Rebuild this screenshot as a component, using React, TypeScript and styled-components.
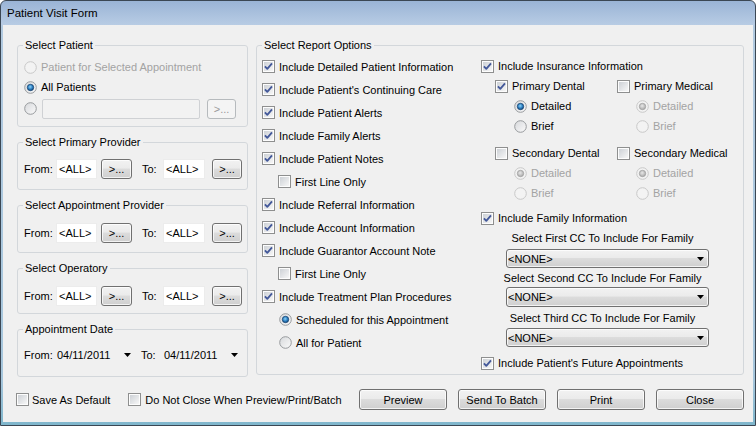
import React from "react";
import styled, { createGlobalStyle } from "styled-components";

const GlobalStyle = createGlobalStyle`
  html, body {
    margin: 0;
    padding: 0;
    background: #ffffff;
  }
  body {
    font-family: "Liberation Sans", Arial, sans-serif;
    font-size: 11px;
    color: #000;
  }
  #root {
    width: 756px;
    height: 426px;
  }
`;

const Window = styled.div`
  width: 756px;
  height: 426px;
  box-sizing: border-box;
  display: flex;
  flex-direction: column;
  padding: 0 2px 3px 2px;
  border: 1px solid #3b4754;
  border-radius: 6px 6px 0 0;
  overflow: hidden;
  background: linear-gradient(#9ab4d6 0px, #b8cce4 24px, #b2cae0 26px, #a6c6dc 380px, #7fb6cc 100%);
`;

const TitleBar = styled.div`
  height: 24px;
  display: flex;
  align-items: center;
  padding-left: 4px;
  font-size: 11.5px;
`;

const Body = styled.div`
  flex: 1;
  display: flex;
  flex-direction: column;
  padding: 14px 9px 0 14px;
  background: #f0f0f0;
`;

const Main = styled.div`
  display: flex;
  gap: 8px;
`;

const LeftColumn = styled.div`
  width: 231px;
  display: flex;
  flex-direction: column;
  gap: 9px;
`;

const Group = styled.fieldset<{ $h: number; $w?: number }>`
  margin: 0;
  padding: 0;
  min-width: 0;
  box-sizing: border-box;
  height: ${(p) => p.$h}px;
  width: ${(p) => (p.$w ? `${p.$w}px` : "auto")};
  border: 1px solid #d3d7db;
  border-radius: 3px;
`;

const Legend = styled.legend`
  margin-left: 5px;
  padding: 0 2px;
  line-height: 13px;
  font-size: 11px;
`;

const GroupInner = styled.div<{ $pt?: number; $pl?: number }>`
  display: flex;
  flex-direction: column;
  padding: ${(p) => p.$pt ?? 0}px 0 0 ${(p) => p.$pl ?? 6}px;
`;

const Opt = styled.div<{ $h?: number; $indent?: number; $mt?: number; $gap?: number }>`
  display: flex;
  align-items: center;
  gap: ${(p) => p.$gap ?? 4}px;
  height: ${(p) => p.$h ?? 23}px;
  padding-left: ${(p) => p.$indent ?? 0}px;
  margin-top: ${(p) => p.$mt ?? 0}px;
  white-space: nowrap;
`;

const OptText = styled.span<{ $disabled?: boolean }>`
  color: ${(p) => (p.$disabled ? "#a3a3a3" : "#000")};
`;

const FieldRow = styled.div<{ $pt?: number }>`
  display: flex;
  align-items: center;
  height: 21px;
  margin-top: ${(p) => p.$pt ?? 9}px;
  padding-left: 6px;
  white-space: nowrap;
`;

const FieldLabel = styled.span<{ $w: number; $ml?: number }>`
  width: ${(p) => p.$w}px;
  margin-left: ${(p) => p.$ml ?? 0}px;
  flex-shrink: 0;
`;

const TextBox = styled.div<{ $w: number; $ml?: number; $disabled?: boolean }>`
  width: ${(p) => p.$w}px;
  height: 20px;
  margin-left: ${(p) => p.$ml ?? 0}px;
  box-sizing: border-box;
  display: flex;
  align-items: center;
  padding-left: 2px;
  flex-shrink: 0;
  background: ${(p) => (p.$disabled ? "#f2f2f2" : "#ffffff")};
  border: 1px solid ${(p) => (p.$disabled ? "#cfd1d4" : "#ececec")};
  border-radius: ${(p) => (p.$disabled ? "2px" : "0")};
`;

const Button = styled.button<{ $w: number; $ml?: number; $h?: number }>`
  width: ${(p) => p.$w}px;
  height: ${(p) => p.$h ?? 21}px;
  margin: 0 0 0 ${(p) => p.$ml ?? 0}px;
  padding: 0;
  flex-shrink: 0;
  box-sizing: border-box;
  border: 1px solid #707070;
  border-radius: 3px;
  background: linear-gradient(#f2f2f2 0%, #ebebeb 45%, #dcdcdc 50%, #cfcfcf 100%);
  box-shadow: inset 0 0 0 1px rgba(255, 255, 255, 0.75);
  font: 11px "Liberation Sans", Arial, sans-serif;
  color: #000;
  &:disabled {
    border-color: #b6babd;
    background: #f4f4f4;
    color: #9a9a9a;
    box-shadow: none;
  }
`;

const DateBox = styled.div<{ $w: number; $pr: number }>`
  width: ${(p) => p.$w}px;
  height: 20px;
  box-sizing: border-box;
  display: flex;
  align-items: center;
  justify-content: space-between;
  padding: 0 ${(p) => p.$pr}px 0 1px;
  flex-shrink: 0;
`;

const MiddleGroupInner = styled.div`
  display: flex;
  padding-left: 5px;
`;

const OptionsColumn = styled.div<{ $w?: number; $pt: number }>`
  display: flex;
  flex-direction: column;
  width: ${(p) => (p.$w ? `${p.$w}px` : "auto")};
  padding-top: ${(p) => p.$pt}px;
  flex: ${(p) => (p.$w ? "0 0 auto" : "1")};
`;

const InsuranceGrid = styled.div<{ $mt?: number }>`
  display: grid;
  grid-template-columns: 122px auto;
  margin: ${(p) => p.$mt ?? 0}px 0 0 14px;
`;

const InsuranceBlock = styled.div`
  display: flex;
  flex-direction: column;
`;

const CcLabel = styled.div<{ $mt?: number }>`
  width: 205px;
  height: 19px;
  margin: ${(p) => p.$mt ?? 0}px 0 0 19px;
  display: flex;
  align-items: center;
  justify-content: center;
  white-space: nowrap;
`;

const Combo = styled.div<{ $mt?: number; $h?: number }>`
  width: 203px;
  height: ${(p) => p.$h ?? 19}px;
  margin: ${(p) => p.$mt ?? 0}px 0 0 25px;
  box-sizing: border-box;
  display: flex;
  align-items: center;
  justify-content: space-between;
  padding: 0 4px 0 1px;
  border: 1px solid #707070;
  border-radius: 3px;
  background: linear-gradient(#f2f2f2 0%, #ebebeb 45%, #dcdcdc 50%, #cfcfcf 100%);
  box-shadow: inset 0 0 0 1px rgba(255, 255, 255, 0.75);
`;

const BottomBar = styled.div`
  display: flex;
  align-items: center;
  height: 21px;
  margin: 12px 0 0 -1px;
  white-space: nowrap;
`;

const BottomCheck = styled.div<{ $ml?: number; $gap: number }>`
  display: flex;
  align-items: center;
  gap: ${(p) => p.$gap}px;
  margin-left: ${(p) => p.$ml ?? 0}px;
`;

const ActionButtons = styled.div`
  display: flex;
  gap: 11px;
  margin-left: auto;
`;

const MarkSvg = styled.svg`
  flex-shrink: 0;
  display: block;
`;

function CheckMark({ checked = false, disabled = false }: { checked?: boolean; disabled?: boolean }) {
  return (
    <MarkSvg width="13" height="13" viewBox="0 0 13 13">
      <defs>
        <linearGradient id="cbFill" x1="0" y1="0" x2="1" y2="1">
          <stop offset="0" stopColor="#cdd1d6" />
          <stop offset="1" stopColor="#f7f7f7" />
        </linearGradient>
      </defs>
      <rect x="0.5" y="0.5" width="12" height="12" fill="#fdfdfd" stroke={disabled ? "#c2c2c2" : "#8e8f8f"} />
      <rect x="2" y="2" width="9" height="9" fill={disabled ? "#f4f4f4" : "url(#cbFill)"} />
      {checked && (
        <path d="M2.9 6.3 L5.3 8.9 L10 3.3" fill="none" stroke="#44599a" strokeWidth="1.8" strokeLinejoin="round" />
      )}
    </MarkSvg>
  );
}

function RadioMark({ checked = false, disabled = false }: { checked?: boolean; disabled?: boolean }) {
  return (
    <MarkSvg width="13" height="13" viewBox="0 0 13 13">
      <defs>
        <linearGradient id="rbFill" x1="0" y1="0" x2="1" y2="1">
          <stop offset="0" stopColor="#d6d8db" />
          <stop offset="1" stopColor="#fbfbfb" />
        </linearGradient>
        <radialGradient id="rbDot" cx="0.45" cy="0.4" r="0.6">
          <stop offset="0" stopColor="#8fd3f7" />
          <stop offset="0.6" stopColor="#2b7fc2" />
          <stop offset="1" stopColor="#15477a" />
        </radialGradient>
        <radialGradient id="rbDotOff" cx="0.45" cy="0.4" r="0.6">
          <stop offset="0" stopColor="#e8e8e8" />
          <stop offset="1" stopColor="#a8a8a8" />
        </radialGradient>
      </defs>
      <circle cx="6.5" cy="6.5" r="5.8" fill={disabled ? "#f3f3f3" : "url(#rbFill)"} stroke={disabled ? "#c8c8c8" : "#979a9d"} />
      {checked && (
        <circle
          cx="6.5"
          cy="6.5"
          r="3.2"
          fill={disabled ? "url(#rbDotOff)" : "url(#rbDot)"}
          stroke={disabled ? "#a2a2a2" : "#1a4674"}
          strokeWidth="0.8"
        />
      )}
    </MarkSvg>
  );
}

function DropArrow() {
  return (
    <MarkSvg width="7" height="4" viewBox="0 0 7 4">
      <path d="M0 0 H7 L3.5 4 Z" fill="#000" />
    </MarkSvg>
  );
}

function RangeRow({ pt }: { pt?: number }) {
  return (
    <FieldRow $pt={pt}>
      <FieldLabel $w={32}>From:</FieldLabel>
      <TextBox $w={41}>{"<ALL>"}</TextBox>
      <Button $w={31} $h={20} $ml={4}>&gt;...</Button>
      <FieldLabel $w={21} $ml={10}>To:</FieldLabel>
      <TextBox $w={42}>{"<ALL>"}</TextBox>
      <Button $w={30} $h={20} $ml={7}>&gt;...</Button>
    </FieldRow>
  );
}

const reportOptions: { label: string; kind: "check" | "radio"; checked: boolean; indent: number }[] = [
  { label: "Include Detailed Patient Information", kind: "check", checked: true, indent: 0 },
  { label: "Include Patient's Continuing Care", kind: "check", checked: true, indent: 0 },
  { label: "Include Patient Alerts", kind: "check", checked: true, indent: 0 },
  { label: "Include Family Alerts", kind: "check", checked: true, indent: 0 },
  { label: "Include Patient Notes", kind: "check", checked: true, indent: 0 },
  { label: "First Line Only", kind: "check", checked: false, indent: 16 },
  { label: "Include Referral Information", kind: "check", checked: true, indent: 0 },
  { label: "Include Account Information", kind: "check", checked: true, indent: 0 },
  { label: "Include Guarantor Account Note", kind: "check", checked: true, indent: 0 },
  { label: "First Line Only", kind: "check", checked: false, indent: 16 },
  { label: "Include Treatment Plan Procedures", kind: "check", checked: true, indent: 0 },
  { label: "Scheduled for this Appointment", kind: "radio", checked: true, indent: 17 },
  { label: "All for Patient", kind: "radio", checked: false, indent: 17 },
];

function InsuranceChoice({ label, checked, enabled }: { label: string; checked: boolean; enabled: boolean }) {
  return (
    <InsuranceBlock>
      <Opt $h={20}>
        <CheckMark checked={checked} />
        <OptText>{label}</OptText>
      </Opt>
      <Opt $h={20} $indent={19}>
        <RadioMark checked disabled={!enabled} />
        <OptText $disabled={!enabled}>Detailed</OptText>
      </Opt>
      <Opt $h={20} $indent={19}>
        <RadioMark disabled={!enabled} />
        <OptText $disabled={!enabled}>Brief</OptText>
      </Opt>
    </InsuranceBlock>
  );
}

export default function App() {
  return (
    <>
      <GlobalStyle />
      <Window>
        <TitleBar>Patient Visit Form</TitleBar>
        <Body>
          <Main>
            <LeftColumn>
              <Group $h={88}>
                <Legend>Select Patient</Legend>
                <GroupInner $pt={5}>
                  <Opt $h={20}>
                    <RadioMark disabled />
                    <OptText $disabled>Patient for Selected Appointment</OptText>
                  </Opt>
                  <Opt $h={20}>
                    <RadioMark checked />
                    <OptText>All Patients</OptText>
                  </Opt>
                  <Opt $h={21} $mt={1} $gap={0}>
                    <RadioMark />
                    <TextBox $w={158} $ml={5} $disabled />
                    <Button $w={29} $h={20} $ml={7} disabled>
                      &gt;...
                    </Button>
                  </Opt>
                </GroupInner>
              </Group>

              <Group $h={54}>
                <Legend>Select Primary Provider</Legend>
                <RangeRow pt={9} />
              </Group>

              <Group $h={54}>
                <Legend>Select Appointment Provider</Legend>
                <RangeRow pt={10} />
              </Group>

              <Group $h={52}>
                <Legend>Select Operatory</Legend>
                <RangeRow pt={10} />
              </Group>

              <Group $h={54}>
                <Legend>Appointment Date</Legend>
                <FieldRow $pt={8}>
                  <FieldLabel $w={32}>From:</FieldLabel>
                  <DateBox $w={80} $pr={5}>
                    04/11/2011
                    <DropArrow />
                  </DateBox>
                  <FieldLabel $w={22} $ml={5}>To:</FieldLabel>
                  <DateBox $w={79} $pr={4}>
                    04/11/2011
                    <DropArrow />
                  </DateBox>
                </FieldRow>
              </Group>
            </LeftColumn>

            <Group $h={336} $w={488}>
              <Legend>Select Report Options</Legend>
              <MiddleGroupInner>
                <OptionsColumn $w={219} $pt={3}>
                  {reportOptions.map((o, i) => (
                    <Opt key={i} $indent={o.indent}>
                      {o.kind === "check" ? <CheckMark checked={o.checked} /> : <RadioMark checked={o.checked} />}
                      <OptText>{o.label}</OptText>
                    </Opt>
                  ))}
                </OptionsColumn>

                <OptionsColumn $pt={4}>
                  <Opt $h={20}>
                    <CheckMark checked />
                    <OptText>Include Insurance Information</OptText>
                  </Opt>
                  <InsuranceGrid>
                    <InsuranceChoice label="Primary Dental" checked enabled />
                    <InsuranceChoice label="Primary Medical" checked={false} enabled={false} />
                  </InsuranceGrid>
                  <InsuranceGrid $mt={7}>
                    <InsuranceChoice label="Secondary Dental" checked={false} enabled={false} />
                    <InsuranceChoice label="Secondary Medical" checked={false} enabled={false} />
                  </InsuranceGrid>
                  <Opt $h={20} $mt={5}>
                    <CheckMark checked />
                    <OptText>Include Family Information</OptText>
                  </Opt>
                  <CcLabel>Select First CC To Include For Family</CcLabel>
                  <Combo $mt={2}>
                    {"<NONE>"}
                    <DropArrow />
                  </Combo>
                  <CcLabel>Select Second CC To Include For Family</CcLabel>
                  <Combo $h={20}>
                    {"<NONE>"}
                    <DropArrow />
                  </Combo>
                  <CcLabel $mt={1}>Select Third CC To Include For Family</CcLabel>
                  <Combo $mt={1}>
                    {"<NONE>"}
                    <DropArrow />
                  </Combo>
                  <Opt $h={20} $mt={6}>
                    <CheckMark checked />
                    <OptText>Include Patient's Future Appointments</OptText>
                  </Opt>
                </OptionsColumn>
              </MiddleGroupInner>
            </Group>
          </Main>

          <BottomBar>
            <BottomCheck $gap={3}>
              <CheckMark />
              <span>Save As Default</span>
            </BottomCheck>
            <BottomCheck $gap={4} $ml={18}>
              <CheckMark />
              <span>Do Not Close When Preview/Print/Batch</span>
            </BottomCheck>
            <ActionButtons>
              <Button $w={88}>Preview</Button>
              <Button $w={88}>Send To Batch</Button>
              <Button $w={88}>Print</Button>
              <Button $w={88}>Close</Button>
            </ActionButtons>
          </BottomBar>
        </Body>
      </Window>
    </>
  );
}
